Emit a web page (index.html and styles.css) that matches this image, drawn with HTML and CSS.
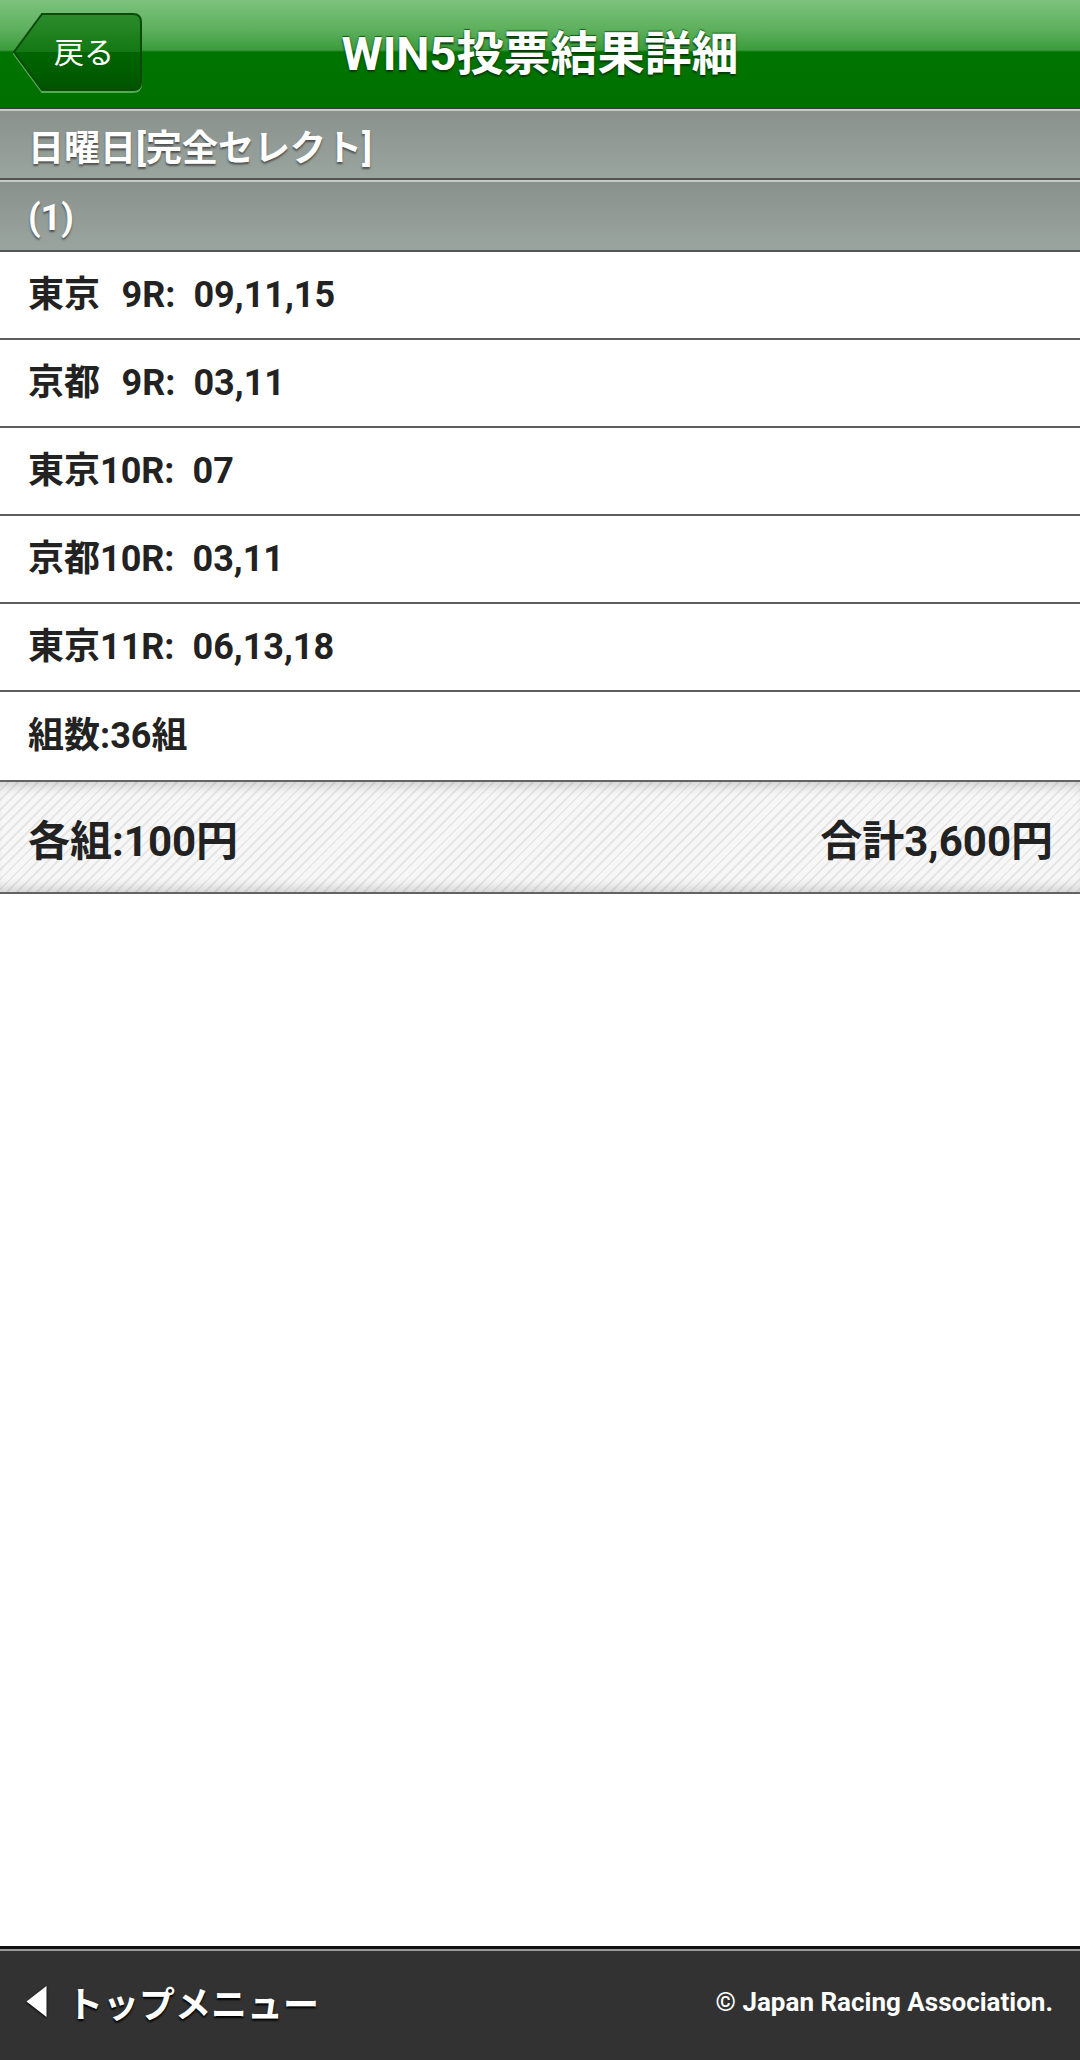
FILE: index.html
```html
<!DOCTYPE html>
<html lang="ja">
<head>
<meta charset="utf-8">
<title>WIN5投票結果詳細</title>
<link rel="stylesheet" href="styles.css">
</head>
<body>
<div class="page">
  <header class="hdr">
    <a class="back" href="#">
      <svg class="back-shape" viewBox="0 0 132 82" width="132" height="82" aria-hidden="true">
        <defs>
          <linearGradient id="bg" x1="0" y1="0" x2="0" y2="1">
            <stop offset="0" stop-color="#2c8c2c"/>
            <stop offset="0.5" stop-color="#137813"/>
            <stop offset="0.5" stop-color="#006600"/>
            <stop offset="1" stop-color="#005400"/>
          </linearGradient>
        </defs>
        <path d="M30,4 H121 Q129,4 129,12 V72 Q129,80 121,80 H30 L2,42 Z" fill="none" stroke="#4fae4f" stroke-width="2"/>
        <path d="M30,2 H121 Q129,2 129,10 V70 Q129,78 121,78 H30 L2,40 Z" fill="url(#bg)" stroke="#0b4a0b" stroke-width="2"/>
      </svg>
      <span class="back-label">戻る</span>
    </a>
    <h1 class="title">WIN5投票結果詳細</h1>
    <div class="hdr-side"></div>
  </header>

  <div class="bar bar-first">日曜日[完全セレクト]</div>
  <div class="bar">(1)</div>

  <ul class="list">
    <li class="row"><span class="race">東京<span class="fig"></span>9R:</span><span class="num">09,11,15</span></li>
    <li class="row"><span class="race">京都<span class="fig"></span>9R:</span><span class="num">03,11</span></li>
    <li class="row"><span class="race">東京10R:</span><span class="num">07</span></li>
    <li class="row"><span class="race">京都10R:</span><span class="num">03,11</span></li>
    <li class="row"><span class="race">東京11R:</span><span class="num">06,13,18</span></li>
    <li class="row row-last">組数:36組</li>
  </ul>

  <div class="total">
    <span>各組:100円</span>
    <span>合計3,600円</span>
  </div>

  <footer class="foot">
    <a class="foot-menu" href="#">
      <svg class="foot-arrow" viewBox="0 0 20 31" width="21" height="31" aria-hidden="true">
        <polygon points="20,0 20,31 0,15.5" fill="#ffffff"/>
      </svg>
      <span>トップメニュー</span>
    </a>
    <span class="copy">© Japan Racing Association.</span>
  </footer>
</div>
</body>
</html>
```

FILE: styles.css
```css
* { box-sizing: border-box; }

html, body {
  margin: 0;
  padding: 0;
  background: #ffffff;
}

body {
  font-family: Roboto, "Noto Sans CJK JP", "Noto Sans", sans-serif;
  color: #222222;
}

.page {
  min-height: 100vh;
  display: flex;
  flex-direction: column;
}

/* Header */
.hdr {
  height: 109px;
  display: grid;
  grid-template-columns: 1fr auto 1fr;
  align-items: center;
  background: linear-gradient(to bottom, #7dc27d 0px, #5cb05c 30px, #3c9c3c 50px, #007400 52px, #007000 107px);
  border-bottom: 2px solid #3e3e3e;
}

.back {
  position: relative;
  justify-self: start;
  margin-left: 12px;
  margin-top: -2px;
  width: 132px;
  height: 82px;
  display: flex;
  align-items: center;
  justify-content: center;
  padding-left: 12px;
  text-decoration: none;
}

.back-shape {
  position: absolute;
  left: 0;
  top: 0;
}

.back-label {
  position: relative;
  color: #ffffff;
  font-size: 30px;
  font-weight: 400;
  line-height: 1;
}

.title {
  margin: 0;
  color: #ffffff;
  font-size: 47px;
  font-weight: 700;
  line-height: 1;
  white-space: nowrap;
  text-shadow: 0 2px 2px #003a00, 0 -1px 1px #1a5a1a;
}

/* Gray section bars */
.bar {
  height: 72px;
  display: flex;
  align-items: center;
  padding-left: 28px;
  padding-top: 4px;
  background: linear-gradient(to bottom, #8a918d, #9aa59f);
  border-top: 2px solid #c3ccc7;
  border-bottom: 2px solid #545454;
  color: #ffffff;
  font-size: 36px;
  font-weight: 700;
  text-shadow: 0 2px 2px rgba(60, 60, 60, 0.8);
}

.bar-first {
  height: 71px;
  padding-top: 0;
}

/* Rows */
.list {
  list-style: none;
  margin: 0;
  padding: 0;
}

.row {
  height: 88px;
  line-height: 86px;
  padding-left: 28px;
  border-bottom: 2px solid #5e5e5e;
  font-size: 36px;
  font-weight: 700;
  color: #222222;
  white-space: nowrap;
}

.row-last {
  border-bottom: none;
  line-height: 88px;
}

.fig {
  display: inline-block;
  width: 0.6em;
}

.num {
  margin-left: 18px;
}

/* Total bar */
.total {
  height: 114px;
  display: flex;
  justify-content: space-between;
  align-items: center;
  padding: 0 27px 0 28px;
  border-top: 2px solid #646464;
  border-bottom: 2px solid #646464;
  background-color: #f7f7f7;
  background-image: repeating-linear-gradient(135deg, rgba(255,255,255,0) 0px, rgba(255,255,255,0) 5px, #e6e6e6 5px, #e6e6e6 7px);
  box-shadow: inset 0 12px 12px -8px rgba(0,0,0,0.16), inset 0 -12px 12px -8px rgba(0,0,0,0.16);
  font-size: 42px;
  font-weight: 700;
  color: #222222;
}

/* Footer */
.foot {
  margin-top: auto;
  height: 114px;
  display: flex;
  justify-content: space-between;
  align-items: center;
  padding: 0 27px 6px 26px;
  background: #323232;
  border-top: 3px solid #111111;
  box-shadow: inset 0 2px 0 #9a9a9a;
  color: #ffffff;
}

.foot-menu {
  display: flex;
  align-items: center;
  gap: 20px;
  color: #ffffff;
  text-decoration: none;
  font-size: 36px;
  font-weight: 700;
  text-shadow: 0 2px 2px #000000;
}

.foot-arrow {
  display: block;
  filter: drop-shadow(0 1px 1px #000);
}

.copy {
  font-size: 26px;
  font-weight: 700;
  color: #ffffff;
}
```
